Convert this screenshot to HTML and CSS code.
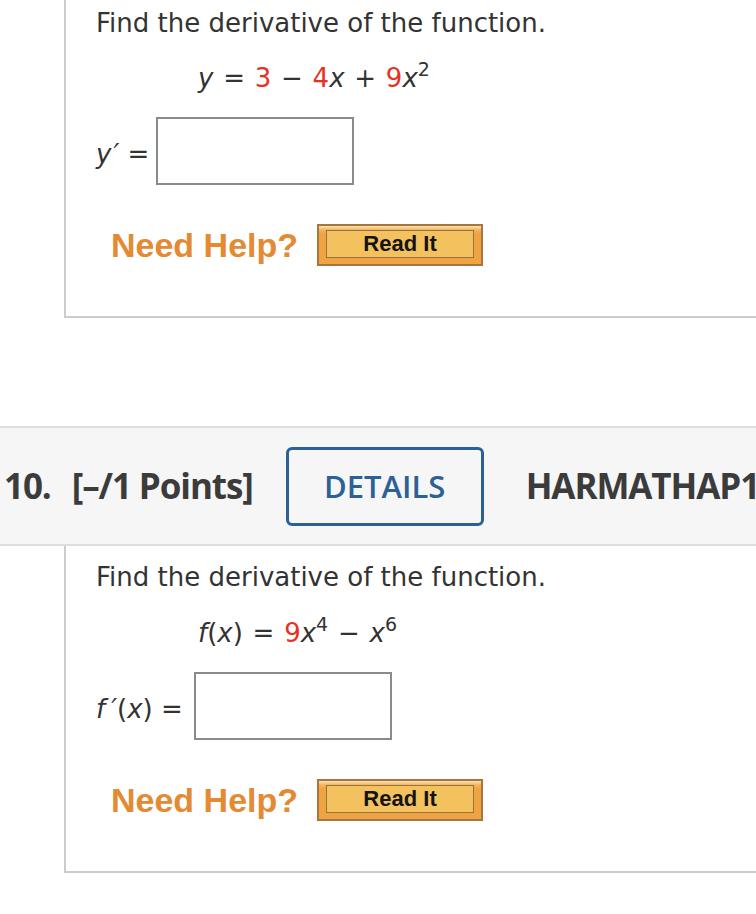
FILE: index.html
```html
<!DOCTYPE html>
<html lang="en">
<head>
<meta charset="utf-8">
<title>Find the derivative</title>
<link rel="stylesheet" href="styles.css">
</head>
<body>
<div class="q">
  <p class="prompt">Find the derivative of the function.</p>
  <p class="eq"><i>y</i> = <span class="r">3</span> − <span class="r">4</span><i>x</i> + <span class="r">9</span><i>x</i><sup>2</sup></p>
  <div class="answer">
    <span class="lbl"><i>y</i><i class="prime">′</i> =</span>
    <div class="box box-a"></div>
  </div>
  <div class="help">
    <span class="need">Need Help?</span>
    <span class="readit"><span class="readit-in">Read It</span></span>
  </div>
</div>

<div class="qhead">
  <span class="num">10.</span>
  <span class="pts">[–/1 Points]</span>
  <span class="details">DETAILS</span>
  <span class="code">HARMATHAP12</span>
</div>

<div class="q q-second">
  <p class="prompt">Find the derivative of the function.</p>
  <p class="eq"><i>f</i>(<i>x</i>) = <span class="r">9</span><i>x</i><sup>4</sup> − <i>x</i><sup>6</sup></p>
  <div class="answer">
    <span class="lbl"><i>f</i><i class="prime prime-f">′</i>(<i>x</i>) =</span>
    <div class="box box-b"></div>
  </div>
  <div class="help">
    <span class="need">Need Help?</span>
    <span class="readit"><span class="readit-in">Read It</span></span>
  </div>
</div>
</body>
</html>
```

FILE: styles.css
```css
html, body {
  margin: 0;
  padding: 0;
  background: #ffffff;
}
body {
  width: 756px;
  overflow: hidden;
  font-family: "DejaVu Sans", Verdana, sans-serif;
  color: #333333;
}

.q {
  margin-left: 64px;
  border-left: 2px solid #cccccc;
  border-bottom: 2px solid #cccccc;
  padding: 8px 0 50px 30px;
}
.q-second {
  padding-top: 16px;
}

.prompt {
  margin: 0;
  font-size: 26px;
  line-height: 31px;
}

.eq {
  margin: 24px 0 0 102px;
  font-size: 26px;
  line-height: 31px;
  white-space: nowrap;
  word-spacing: 1.5px;
}
.q-second .eq {
  margin-top: 25px;
}
.eq i, .lbl i {
  font-style: italic;
}
.prime {
  margin-left: 2px;
}
.prime-f {
  margin-left: 6px;
}
.r {
  color: #e8321f;
}
sup {
  font-size: 19px;
  line-height: 0;
  vertical-align: 11px;
}

.answer {
  display: flex;
  align-items: center;
  margin-top: 23px;
}
.lbl {
  font-size: 26px;
  line-height: 31px;
  margin-top: 6px;
  white-space: nowrap;
}
.box {
  box-sizing: border-box;
  width: 198px;
  height: 68px;
  border: 2px solid #8a8a8a;
  background: #ffffff;
  flex: none;
}
.box-a { margin-left: 7px; }
.box-b { margin-left: 11px; }

.help {
  display: flex;
  align-items: center;
  margin-top: 39px;
  padding-left: 15px;
}
.need {
  font-family: "Liberation Sans", Arial, sans-serif;
  font-weight: bold;
  font-size: 34px;
  line-height: 34px;
  color: #e38a33;
}
.readit {
  display: block;
  box-sizing: border-box;
  width: 166px;
  height: 42px;
  margin-left: 19px;
  border: 2px solid #a8763c;
  padding: 4px 7px 6px 7px;
  background: linear-gradient(#fbe3b6 0px, #f2b25a 4px, #f0a343 8px, #f0a343 100%);
}
.readit-in {
  display: flex;
  align-items: center;
  justify-content: center;
  box-sizing: border-box;
  height: 100%;
  border: 1px solid #97743f;
  background: #f3c15d;
  font-family: "Liberation Sans", Arial, sans-serif;
  font-weight: bold;
  font-size: 22px;
  color: #141414;
}

.qhead {
  margin-top: 108px;
  height: 116px;
  background: #f6f6f6;
  border-top: 2px solid #dedede;
  border-bottom: 2px solid #dedede;
  display: flex;
  align-items: center;
  padding-left: 4px;
  white-space: nowrap;
  overflow: hidden;
  font-family: "Open Sans", "Noto Sans", sans-serif;
}
.num, .pts, .code {
  font-weight: 700;
  font-size: 35px;
  letter-spacing: -1.1px;
  color: #3b3b3b;
  line-height: 40px;
}
.pts {
  margin-left: 21px;
}
.details {
  box-sizing: border-box;
  width: 198px;
  height: 79px;
  margin-left: 33px;
  border: 3px solid #2b6195;
  border-radius: 6px;
  display: flex;
  align-items: center;
  justify-content: center;
  font-weight: 600;
  font-size: 31px;
  color: #2b6195;
  flex: none;
}
.code {
  margin-left: 42px;
}
```
